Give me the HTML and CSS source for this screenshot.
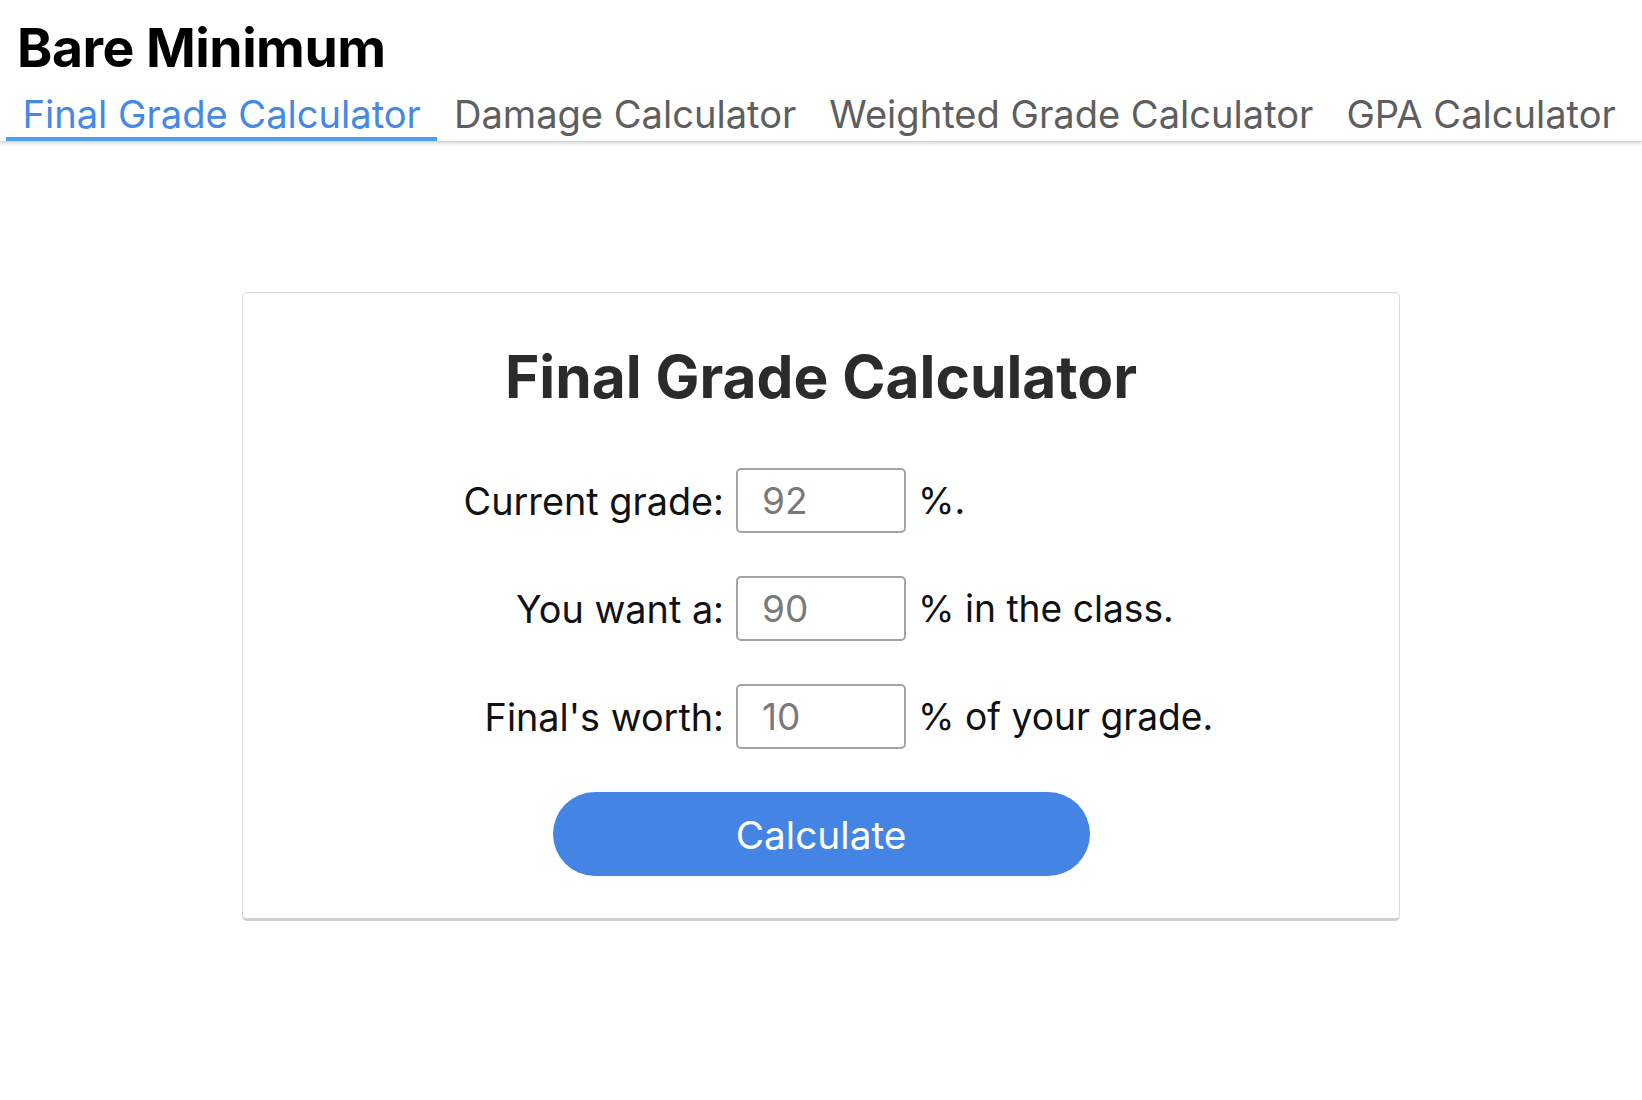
FILE: index.html
```html
<!DOCTYPE html>
<html lang="en">
<head>
<meta charset="utf-8">
<title>Bare Minimum</title>
<link rel="stylesheet" href="styles.css">
</head>
<body>
<header class="site-header">
  <h1 class="brand">Bare Minimum</h1>
  <nav class="tabs">
    <a class="tab active" href="#">Final Grade Calculator</a>
    <a class="tab" href="#">Damage Calculator</a>
    <a class="tab" href="#">Weighted Grade Calculator</a>
    <a class="tab" href="#">GPA Calculator</a>
  </nav>
</header>
<main class="main">
  <section class="card">
    <h2 class="card-title">Final Grade Calculator</h2>
    <form class="calc-form">
      <label class="label" for="cur">Current grade:</label>
      <input class="field" id="cur" type="text" placeholder="92">
      <span class="suffix">%.</span>

      <label class="label" for="want">You want a:</label>
      <input class="field" id="want" type="text" placeholder="90">
      <span class="suffix">% in the class.</span>

      <label class="label" for="worth">Final's worth:</label>
      <input class="field" id="worth" type="text" placeholder="10">
      <span class="suffix">% of your grade.</span>
    </form>
    <div class="actions">
      <button class="btn" type="button">Calculate</button>
    </div>
  </section>
</main>
</body>
</html>
```
FILE: styles.css
```css
* { box-sizing: border-box; }
html, body { margin: 0; padding: 0; background: #fff; }
body {
  font-family: Inter, "Noto Sans", "Liberation Sans", sans-serif;
  color: #111;
  overflow-x: hidden;
}
.site-header {
  border-bottom: 1px solid #d4d8de;
  box-shadow: 0 2px 3px rgba(120, 130, 150, 0.25);
}
.brand {
  margin: 0;
  padding: 15px 0 0 17px;
  font-size: 53.5px;
  line-height: 66px;
  font-weight: 700;
  color: #000;
  letter-spacing: -0.5px;
}
.tabs {
  display: flex;
  margin-left: 6px;
  white-space: nowrap;
}
.tab {
  display: block;
  flex: 0 0 auto;
  padding: 10px 16.5px 0;
  font-size: 38.1px;
  line-height: 46px;
  color: #5e5e5e;
  text-decoration: none;
  border-bottom: 4px solid transparent;
}
.tab.active {
  color: #4688e6;
  border-bottom-color: #4aa0ea;
}
.main {
  padding-top: 150px;
}
.card {
  width: 1158px;
  margin: 0 auto;
  border: 1px solid #dcdcdc;
  border-bottom: 3px solid #cfcfcf;
  border-radius: 5px;
  padding: 49px 0 42px;
}
.card-title {
  margin: 0 0 56px;
  text-align: center;
  font-size: 58.6px;
  line-height: 70px;
  font-weight: 700;
  color: #2b2b2b;
}
.calc-form {
  display: grid;
  grid-template-columns: 1fr 170px 1fr;
  column-gap: 12px;
  row-gap: 43px;
  align-items: center;
}
.label {
  text-align: right;
  font-size: 37.8px;
  color: #111;
}
.suffix {
  font-size: 37.2px;
  color: #111;
}
.field {
  width: 170px;
  height: 65px;
  border: 2px solid #a3a3a3;
  border-radius: 5px;
  padding: 0 0 0 24px;
  font-family: inherit;
  font-size: 37px;
  color: #333;
  background: #fff;
  outline: none;
}
.field::placeholder { color: #7a7a7a; }
.actions {
  display: flex;
  justify-content: center;
  margin-top: 43px;
}
.btn {
  width: 537px;
  height: 84px;
  border: none;
  border-radius: 42px;
  background: #4484e5;
  color: #fff;
  font-family: inherit;
  font-size: 38.8px;
  cursor: pointer;
}
```
